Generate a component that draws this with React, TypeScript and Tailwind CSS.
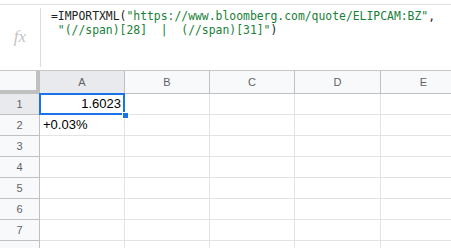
const columns = ["A", "B", "C", "D", "E"];
const colWidths = ["w-[85px]", "w-[85px]", "w-[85px]", "w-[86px]", "w-[86px]"];
const rows = [1, 2, 3, 4, 5, 6, 7, 8];

function FormulaBar() {
  return (
    <div className="mt-[4px] flex h-[66px] border-t border-[#e0e0e0]">
      <div className="flex w-[40px] shrink-0 items-center justify-center pb-[2px]">
        <span className="font-['Liberation_Serif',serif] text-[17px] italic text-[#c4c4c4]">fx</span>
      </div>
      <div className="my-[3px] w-px bg-[#dadce0]" />
      <div className="pl-[10px] pt-[4px] font-['DejaVu_Sans_Mono',monospace] text-[11.4px] leading-[14px] text-[#222] whitespace-pre">
        <div>
          =IMPORTXML(<span className="text-[#188038]">"https://www.bloomberg.com/quote/ELIPCAM:BZ"</span>,
        </div>
        <div>
          {" "}
          <span className="text-[#188038]">"(//span)[28]  |  (//span)[31]"</span>)
        </div>
      </div>
    </div>
  );
}

function HeaderRow() {
  return (
    <div className="flex h-[24px] border-t border-[#c7c7c7]">
      <div className="h-full w-[40px] shrink-0 border-b-[4px] border-r-[4px] border-[#c0c0c0] bg-[#f8f9fa]" />
      {columns.map((c, i) => (
        <div
          key={c}
          className={`${colWidths[i]} flex h-full shrink-0 items-center justify-center border-b border-r border-[#c0c0c0] pt-[1px] text-[11px] text-[#5f6368] ${
            i === 0 ? "bg-[#e8eaed]" : "bg-[#f8f9fa]"
          }`}
        >
          {c}
        </div>
      ))}
    </div>
  );
}

export default function App() {
  return (
    <div className="h-[248px] w-[451px] overflow-hidden bg-white font-['Liberation_Sans',Arial,sans-serif]">
      <FormulaBar />
      <HeaderRow />
      {rows.map((r) => (
        <div key={r} className="flex h-[21px]">
          <div
            className={`flex w-[40px] shrink-0 items-center justify-center border-b border-r border-[#c0c0c0] text-[11px] text-[#5f6368] ${
              r === 1 ? "bg-[#e8eaed]" : "bg-[#f8f9fa]"
            }`}
          >
            {r < 8 ? r : ""}
          </div>
          {columns.map((c, i) => (
            <div
              key={c}
              className={`${colWidths[i]} relative flex shrink-0 items-end border-b border-r border-[#e2e3e3] px-[3px] pb-[3px] text-[13px] leading-[15px] text-black ${
                r === 1 && i === 0 ? "justify-end" : "justify-start"
              }`}
            >
              {r === 1 && i === 0 && (
                <>
                  <span>1.6023</span>
                  <div className="absolute -left-px -top-px bottom-[-1px] right-[-1px] z-10 border-2 border-[#1a73e8]" />
                  <div className="absolute bottom-[-5px] right-[-5px] z-20 h-[7px] w-[7px] border border-white bg-[#1a73e8]" />
                </>
              )}
              {r === 2 && i === 0 && <span>+0.03%</span>}
            </div>
          ))}
        </div>
      ))}
    </div>
  );
}
